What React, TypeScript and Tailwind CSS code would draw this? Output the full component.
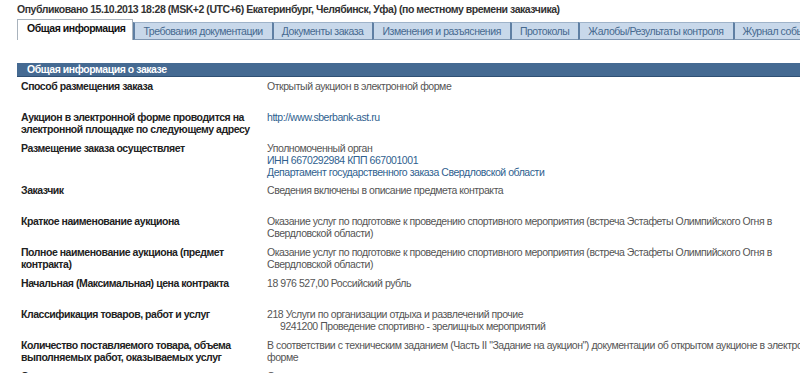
import React from 'react';

const tabs = [
  'Требования документации',
  'Документы заказа',
  'Изменения и разъяснения',
  'Протоколы',
  'Жалобы/Результаты контроля',
  'Журнал событий',
];

type Row = {
  label: string;
  value: React.ReactNode;
};

const linesOf = (lines: string[]) => (
  <>
    {lines.map((l) => (
      <div key={l} className="whitespace-nowrap">
        {l}
      </div>
    ))}
  </>
);

const rows: Row[] = [
  { label: 'Способ размещения заказа', value: 'Открытый аукцион в электронной форме' },
  {
    label: 'Аукцион в электронной форме проводится на электронной площадке по следующему адресу',
    value: <span className="text-[#2f5f8f]">http://www.sberbank-ast.ru</span>,
  },
  {
    label: 'Размещение заказа осуществляет',
    value: (
      <>
        <div>Уполномоченный орган</div>
        <div className="text-[#2f5f8f]">ИНН 6670292984 КПП 667001001</div>
        <div className="text-[#2f5f8f]">Департамент государственного заказа Свердловской области</div>
      </>
    ),
  },
  { label: 'Заказчик', value: 'Сведения включены в описание предмета контракта' },
  {
    label: 'Краткое наименование аукциона',
    value: linesOf([
      'Оказание услуг по подготовке к проведению спортивного мероприятия (встреча Эстафеты Олимпийского Огня в',
      'Свердловской области)',
    ]),
  },
  {
    label: 'Полное наименование аукциона (предмет контракта)',
    value: linesOf([
      'Оказание услуг по подготовке к проведению спортивного мероприятия (встреча Эстафеты Олимпийского Огня в',
      'Свердловской области)',
    ]),
  },
  { label: 'Начальная (Максимальная) цена контракта', value: '18 976 527,00 Российский рубль' },
  {
    label: 'Классификация товаров, работ и услуг',
    value: (
      <>
        <div>218 Услуги по организации отдыха и развлечений прочие</div>
        <div className="pl-[13px]">9241200 Проведение спортивно - зрелищных мероприятий</div>
      </>
    ),
  },
  {
    label: 'Количество поставляемого товара, объема выполняемых работ, оказываемых услуг',
    value: linesOf([
      'В соответствии с техническим заданием (Часть II "Задание на аукцион") документации об открытом аукционе в электронной',
      'форме',
    ]),
  },
  { label: 'Срок поставки товара', value: 'Согласно документации' },
];

export default function App() {
  return (
    <div className="w-[800px] h-[373px] overflow-hidden bg-white font-['Liberation_Sans',Arial,sans-serif] text-[10.5px] tracking-[-0.45px]">
      <div className="w-[880px] pl-[17px]">
        <div className="h-[3px]" />
        <div className="font-bold text-[#333] leading-[13px]">
          Опубликовано 15.10.2013 18:28 (MSK+2 (UTC+6) Екатеринбург, Челябинск, Уфа) (по местному времени заказчика)
        </div>

        {/* Tabs */}
        <div className="flex items-end mt-[3px] h-[21px]">
          <div className="h-[21px] pl-[9px] pr-[7px] pt-[1px] border border-b-0 border-[#a9b3bd] bg-white font-bold text-[#111] whitespace-nowrap">
            Общая информация
          </div>
          {tabs.map((t) => (
            <div
              key={t}
              className="h-[18px] pl-[8px] pr-[9px] leading-[16px] whitespace-nowrap bg-[#c8d8ea] text-[#46698f] border-t border-t-[#9fb3c9] border-b border-b-[#7f97b2] border-l-2 border-l-[#5f7fa3]"
            >
              {t}
            </div>
          ))}
        </div>

        {/* Section header */}
        <div className="mt-[23px] h-[14px] bg-[#456a92] border-b border-[#2f5074] pl-[10px] leading-[13px] font-bold text-white">
          Общая информация о заказе
        </div>

        {/* Rows */}
        <div className="-mt-px">
          {rows.map((r) => (
            <div key={r.label} className="flex min-h-[31px] pt-[4px] pb-[2px] leading-[12px]">
              <div className="w-[250px] shrink-0 pl-[4px] pr-[6px] font-bold text-[#222]">{r.label}</div>
              <div className="w-[600px] text-[#555]">{r.value}</div>
            </div>
          ))}
        </div>
      </div>
    </div>
  );
}
